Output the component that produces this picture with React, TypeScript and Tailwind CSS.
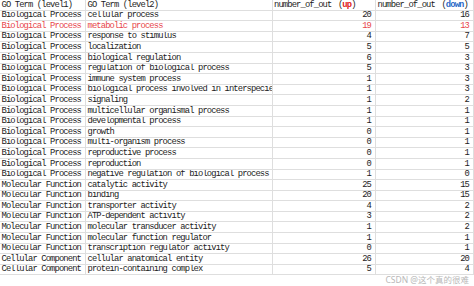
import * as React from "react";

// ---------------------------------------------------------------------------
// Data
// ---------------------------------------------------------------------------

type Row = [string, string, number, number];

const rows: Row[] = [
  ["Biological Process", "cellular process", 20, 16],
  ["Biological Process", "metabolic process", 19, 13],
  ["Biological Process", "response to stimulus", 4, 7],
  ["Biological Process", "localization", 5, 5],
  ["Biological Process", "biological regulation", 6, 3],
  ["Biological Process", "regulation of biological process", 5, 3],
  ["Biological Process", "immune system process", 1, 3],
  ["Biological Process", "biological process involved in interspecies interaction", 1, 3],
  ["Biological Process", "signaling", 1, 2],
  ["Biological Process", "multicellular organismal process", 1, 1],
  ["Biological Process", "developmental process", 1, 1],
  ["Biological Process", "growth", 0, 1],
  ["Biological Process", "multi-organism process", 0, 1],
  ["Biological Process", "reproductive process", 0, 1],
  ["Biological Process", "reproduction", 0, 1],
  ["Biological Process", "negative regulation of biological process", 1, 0],
  ["Molecular Function", "catalytic activity", 25, 15],
  ["Molecular Function", "binding", 20, 15],
  ["Molecular Function", "transporter activity", 4, 2],
  ["Molecular Function", "ATP-dependent activity", 3, 2],
  ["Molecular Function", "molecular transducer activity", 1, 2],
  ["Molecular Function", "molecular function regulator", 1, 1],
  ["Molecular Function", "transcription regulator activity", 0, 1],
  ["Cellular Component", "cellular anatomical entity", 26, 20],
  ["Cellular Component", "protein-containing complex", 5, 4],
];

const highlighted = 1;

// ---------------------------------------------------------------------------
// Cells
// ---------------------------------------------------------------------------

const cellBase =
  "h-[10.6px] border-b border-r border-[#dedede] overflow-hidden whitespace-nowrap leading-[10px] flex items-end";

function TextCell({ children, red }: { children: React.ReactNode; red?: boolean }) {
  return (
    <div className={`${cellBase} pl-[1.5px] ${red ? "text-[#e8474c]" : ""}`}>
      <span>{children}</span>
    </div>
  );
}

function NumCell({ value, red }: { value: number; red?: boolean }) {
  return (
    <div className={`${cellBase} justify-end pr-[4px] ${red ? "text-[#e8474c]" : ""}`}>
      <span>{value}</span>
    </div>
  );
}

// ---------------------------------------------------------------------------
// App
// ---------------------------------------------------------------------------

export default function App() {
  return (
    <div className="relative w-[474px] h-[286px] overflow-hidden bg-white">
      <div className="grid grid-cols-[86px_186.5px_103.5px_98px] w-[474px] text-[8.8px] tracking-[-0.86px] text-[#1c1c1c] font-['Liberation_Mono',monospace]">
        <TextCell>GO Term (level1)</TextCell>
        <TextCell>GO Term (level2)</TextCell>
        <TextCell>
          number_of_out <span className="ml-[2px]">(</span>
          <span className="font-bold text-[#e01818]">up</span>)
        </TextCell>
        <TextCell>
          number_of_out <span className="ml-[2px]">(</span>
          <span className="font-bold text-[#2a6ac8]">down</span>)
        </TextCell>

        {rows.map(([l1, l2, up, down], i) => (
          <React.Fragment key={i}>
            <TextCell red={i === highlighted}>{l1}</TextCell>
            <TextCell red={i === highlighted}>{l2}</TextCell>
            <NumCell value={up} red={i === highlighted} />
            <NumCell value={down} red={i === highlighted} />
          </React.Fragment>
        ))}
      </div>

      {/* watermark */}
      <div className="absolute right-[5px] bottom-[2px] text-[8.5px] leading-none text-[#b8b8b8] font-['Noto_Sans','Noto_Sans_CJK_SC',sans-serif]">
        CSDN @这个真的很难
      </div>
    </div>
  );
}
